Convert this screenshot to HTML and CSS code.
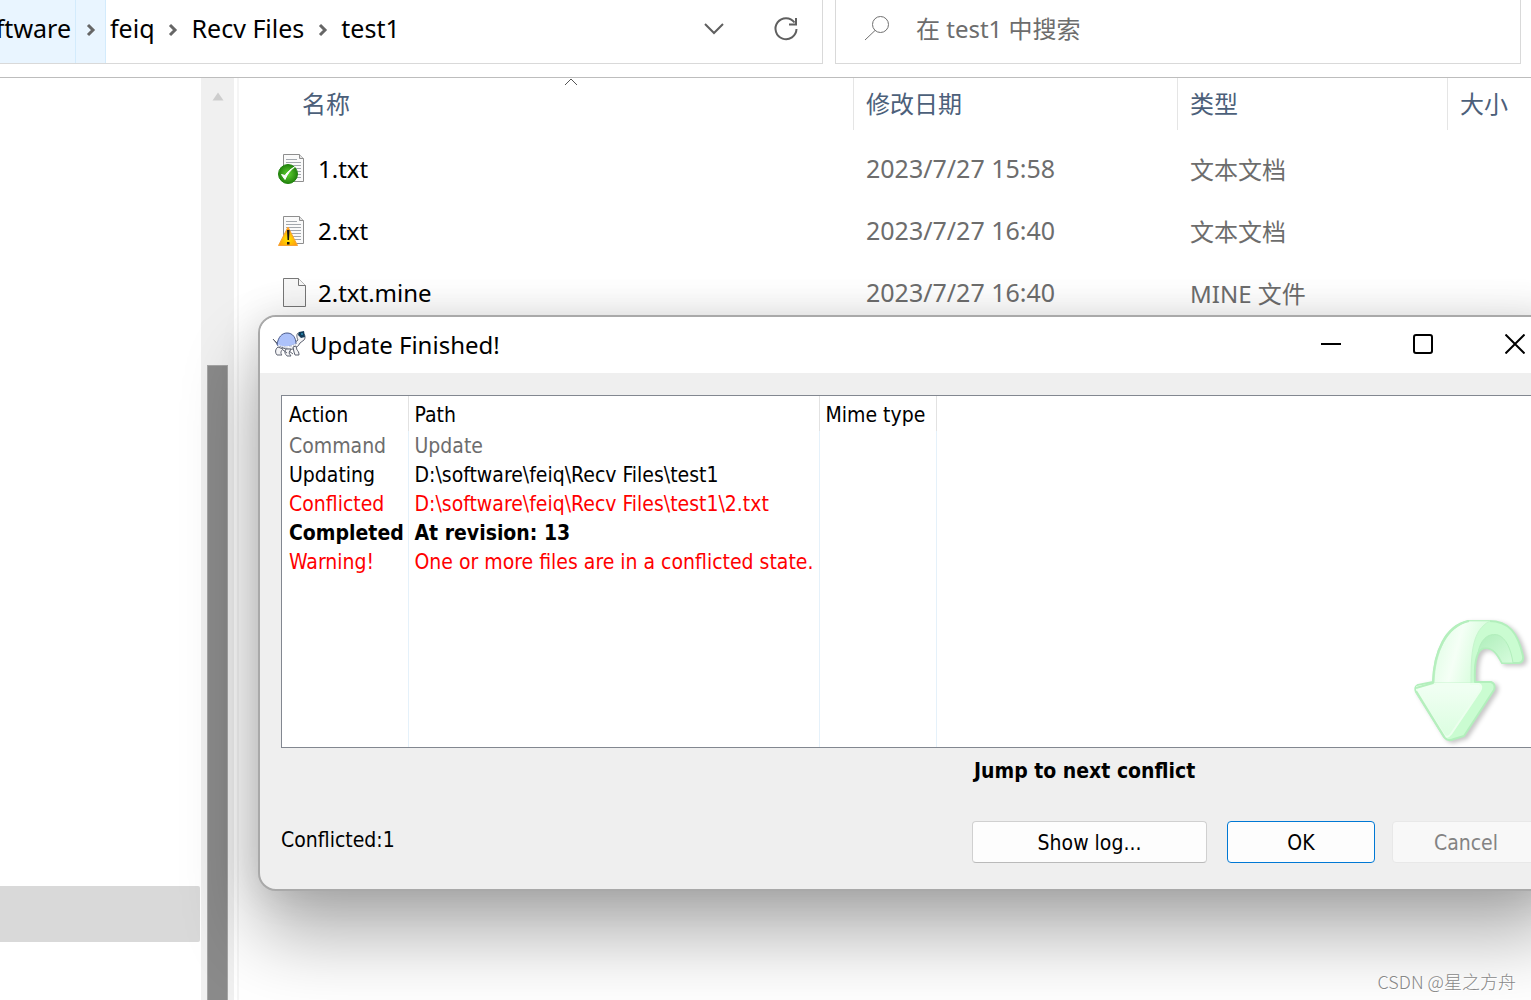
FILE: index.html
```
<!DOCTYPE html>
<html lang="zh-CN">
<head>
    <meta charset="UTF-8">
    <meta name="viewport" content="width=device-width, initial-scale=1.0">
    <title>test1</title>
    <link rel="stylesheet" href="styles.css">
</head>
<body>
    <div class="toolbar">
        <nav class="address">
            <a href="#" class="crumb crumb-hover">ftware</a>
            <span class="sep sep-hover"><svg width="10" height="14" viewBox="0 0 10 14"><path d="M2 2l5 5-5 5"/></svg></span>
            <a href="#" class="crumb">feiq</a>
            <span class="sep"><svg width="10" height="14" viewBox="0 0 10 14"><path d="M2 2l5 5-5 5"/></svg></span>
            <a href="#" class="crumb">Recv Files</a>
            <span class="sep"><svg width="10" height="14" viewBox="0 0 10 14"><path d="M2 2l5 5-5 5"/></svg></span>
            <a href="#" class="crumb">test1</a>
            <div class="address-tools">
                <button class="tool-btn" aria-label="History"><svg width="22" height="14" viewBox="0 0 22 14"><path d="M2 2l9 9 9-9"/></svg></button>
                <button class="tool-btn" aria-label="Refresh"><svg width="26" height="26" viewBox="0 0 26 26"><path d="M21.500 6.500A10.500 10.500 0 1 0 23.500 13M23 2v6.500h-7"/></svg></button>
            </div>
        </nav>
        <label class="search">
            <svg width="26" height="26" viewBox="0 0 26 26"><circle cx="16.500" cy="9.500" r="8"/><path d="M11 15.500L1 25"/></svg>
            <input type="text" placeholder="在 test1 中搜索" aria-label="搜索">
        </label>
    </div>

    <div class="content">
        <div class="tree">
            <div class="tree-selected"></div>
        </div>
        <div class="scrollbar">
            <svg class="scroll-up" width="12" height="9" viewBox="0 0 12 9"><path d="M6 0.500L11.500 8.500H0.500z"/></svg>
            <div class="scroll-thumb"></div>
        </div>
        <div class="files">
            <table class="file-table">
                <thead>
                    <tr>
                        <th class="col-name"><span>名称</span>
                            <svg class="sort" width="14" height="8" viewBox="0 0 14 8"><path d="M1 7l6-6 6 6"/></svg>
                        </th>
                        <th class="col-date"><span>修改日期</span></th>
                        <th class="col-type"><span>类型</span></th>
                        <th class="col-size"><span>大小</span></th>
                    </tr>
                </thead>
                <tbody>
                    <tr>
                        <td>
                            <div class="file">
                                <svg width="30" height="32" viewBox="0 0 30 32">
                                    <defs>
                                        <radialGradient id="green" cx="50%" cy="50%" r="50%"><stop offset="0" stop-color="#5fd431"/><stop offset="1" stop-color="#23820d"/></radialGradient>
                                    </defs>
                                    <path d="M6.500 1.500h16l4 4v23h-20z" fill="#fafafa" stroke="#8e8e8e"/>
                                    <path d="M22.500 1.500v4h4" fill="#e2e2e2" stroke="#8e8e8e"/>
                                    <path d="M9 6.500h11M9 9.500h15M9 12.500h15M9 15.500h15M9 18.500h15M9 21.500h15M9 24.500h15" stroke="#a3a8ad"/>
                                    <circle cx="11" cy="21" r="9.500" fill="url(#green)" stroke="#1f850b"/>
                                    <path d="M4.500 21.500l3.500 5c2-5 5-9 9.500-12.500-4 2-7 5-9.500 8.500z" fill="#fff" stroke="#fff"/>
                                </svg>
                                1.txt
                            </div>
                        </td>
                        <td class="date">2023/7/27 15:58</td>
                        <td class="type">文本文档</td>
                        <td></td>
                    </tr>
                    <tr>
                        <td>
                            <div class="file">
                                <svg width="30" height="32" viewBox="0 0 30 32">
                                    <defs>
                                        <radialGradient id="amber" cx="50%" cy="65%" r="55%"><stop offset="0" stop-color="#ffe600"/><stop offset="1" stop-color="#ff9a0a"/></radialGradient>
                                    </defs>
                                    <path d="M6.500 1.500h16l4 4v23h-20z" fill="#fafafa" stroke="#8e8e8e"/>
                                    <path d="M22.500 1.500v4h4" fill="#e2e2e2" stroke="#8e8e8e"/>
                                    <path d="M9 6.500h11M9 9.500h15M9 12.500h15M9 15.500h15M9 18.500h15M9 21.500h15M9 24.500h15" stroke="#a3a8ad"/>
                                    <path d="M11 12L20.500 30.500h-19z" fill="url(#amber)" stroke="#f7a233"/>
                                    <path d="M10 15h2.500l-0.500 10h-1.500zM10 27h2.500v2.500h-2.500z" fill="#151515"/>
                                </svg>
                                2.txt
                            </div>
                        </td>
                        <td class="date">2023/7/27 16:40</td>
                        <td class="type">文本文档</td>
                        <td></td>
                    </tr>
                    <tr>
                        <td>
                            <div class="file">
                                <svg width="30" height="32" viewBox="0 0 30 32">
                                    <path d="M6.500 1.500h15l7 7v21h-22z" fill="#f7f7f7" stroke="#777"/>
                                    <path d="M21.500 1.500v7h7" fill="#f7f7f7" stroke="#777"/>
                                </svg>
                                2.txt.mine
                            </div>
                        </td>
                        <td class="date">2023/7/27 16:40</td>
                        <td class="type">MINE 文件</td>
                        <td></td>
                    </tr>
                </tbody>
            </table>
        </div>
    </div>

    <div class="dialog" role="dialog" aria-labelledby="dialogTitle">
        <div class="title-bar">
            <svg width="34" height="28" viewBox="0 0 34 28">
                <g fill="#f4f4f6" stroke="#5d6270" stroke-linejoin="round">
                    <path d="M1 9l7 7 3 2c8 3 14 1 17-5l4-3c2-2 1-7-2-7h-4c-2 2-1 5 0 7l-4 3-16 2z"/>
                    <path d="M6 17c-3 2-3 6-1 8h5c-2-2-1-4 1-6zM14 19c-2 3-1 5 1 7h4l-2-3 2-4zM21 17l1 5 1 3h4c0-3-1-4-2-5l-1-4z"/>
                    <path d="M11 20l4 3M17 21l4 3" fill="none"/>
                </g>
                <path d="M5 15C6 7 10 3 15 3c6 0 9 5 9 11-6 3-13 4-19 1z" fill="#adc2fa" stroke="#48598b"/>
                <path d="M6 15c6 3 12 2 18-1" fill="none" stroke="#fff"/>
                <path d="M27 2l5-1 1 6-4 1-3-3z" fill="#123c5b"/>
                <circle cx="30" cy="4" r="1" fill="#2e90b5"/>
            </svg>
            <h1 id="dialogTitle">Update Finished!</h1>
            <div class="window-btns">
                <button aria-label="Minimize"><svg width="20" height="20" viewBox="0 0 20 20"><path d="M0 10h20"/></svg></button>
                <button aria-label="Maximize"><svg width="20" height="20" viewBox="0 0 20 20"><rect x="1" y="1" width="18" height="18" rx="2"/></svg></button>
                <button aria-label="Close"><svg width="20" height="20" viewBox="0 0 20 20"><path d="M0.500 0.500l19 19M19.500 0.500l-19 19"/></svg></button>
            </div>
        </div>
        <div class="dialog-body">
            <div class="list-view">
                <table class="log-table">
                    <thead>
                        <tr><th class="col-action">Action</th><th class="col-path">Path</th><th class="col-mime">Mime type</th><th></th></tr>
                    </thead>
                    <tbody>
                        <tr class="command"><td>Command</td><td>Update</td><td></td><td></td></tr>
                        <tr><td>Updating</td><td>D:\software\feiq\Recv Files\test1</td><td></td><td></td></tr>
                        <tr class="conflict"><td>Conflicted</td><td>D:\software\feiq\Recv Files\test1\2.txt</td><td></td><td></td></tr>
                        <tr class="completed"><td>Completed</td><td>At revision: 13</td><td></td><td></td></tr>
                        <tr class="conflict"><td>Warning!</td><td>One or more files are in a conflicted state.</td><td></td><td></td></tr>
                        <tr class="filler"><td></td><td></td><td></td><td></td></tr>
                    </tbody>
                </table>
                <svg class="update-arrow" width="118" height="128" viewBox="0 0 118 128">
                    <defs>
                        <linearGradient id="face" x1="0" y1="0" x2="1" y2="0.300"><stop offset="0" stop-color="#dcfde1"/><stop offset="0.500" stop-color="#f5fff6"/><stop offset="1" stop-color="#d2fdd8"/></linearGradient>
                        <linearGradient id="head" x1="0" y1="0" x2="0" y2="1"><stop offset="0" stop-color="#f2fff4"/><stop offset="1" stop-color="#dbfee0"/></linearGradient>
                        <linearGradient id="under" x1="0" y1="0" x2="1" y2="1"><stop offset="0" stop-color="#aeeeba"/><stop offset="1" stop-color="#d6fcdc"/></linearGradient>
                    </defs>
                    <g stroke-linejoin="round">
                        <path d="M54 4C31 9 20 35 19 65L4 68Q0 70 2 75l28 45q4 5 10 2l10-3 30-46q2-6-3-8H61C60 44 63 31 72 31c8 0 12 8 16 15h17q5-1 4-7C104 16 95 4 75 4z" fill="#cafcd1" stroke="#b2efbc" stroke-width="2"/>
                        <path d="M64 36C67 20 76 16 84 18c8 3 13 14 15 28H88C84 37 79 31 72 31c-4 0-6 1-8 5z" fill="url(#under)" stroke="#b2efbc"/>
                        <path d="M76 4C58 13 57 36 57 66H20C21 34 33 10 55 4z" fill="url(#face)" stroke="#c6f5cd"/>
                        <path d="M3 70l16-3h46q4 2 1 7l-29 43q-4 5-7 1L3 75z" fill="url(#head)" stroke="#ecffee" stroke-width="2"/>
                        <path d="M22 66h34v4H22z" fill="#f0fff2"/>
                        <path d="M2 71l17-5C20 33 33 9 55 4M2 74l29 47" fill="none" stroke="#b5efbd" stroke-width="2"/>
                    </g>
                </svg>
            </div>
            <div class="jump-row">
                <a href="#" class="jump">Jump to next conflict</a>
            </div>
            <div class="dialog-footer">
                <span class="summary">Conflicted:1</span>
                <button class="btn btn-log">Show log...</button>
                <button class="btn btn-default">OK</button>
                <button class="btn" disabled>Cancel</button>
            </div>
        </div>
    </div>

    <div class="watermark">CSDN @星之方舟</div>
</body>
</html>
```
FILE: styles.css
```
* {
    box-sizing: border-box;
}
body {
    margin: 0;
    height: 100vh;
    display: flex;
    flex-direction: column;
    position: relative;
    overflow: hidden;
    background-color: #fff;
    color: #000;
    font-family: "Noto Sans", "Noto Sans CJK SC", sans-serif;
    font-size: 24px;
}
svg {
    display: block;
    flex: none;
    fill: none;
}
a {
    color: inherit;
    text-decoration: none;
}
button,
input {
    font: inherit;
    color: inherit;
    background: none;
    border: none;
    padding: 0;
}

/* address bar and search */
.toolbar {
    display: grid;
    grid-template-columns: 823fr 686fr;
    gap: 12px;
    height: 78px;
    padding: 0 10px 13px 0;
    border-bottom: 1px solid #bdbdbd;
}
.address {
    min-width: 0;
    display: flex;
    align-items: stretch;
    border: 1px solid #d9d9d9;
    border-width: 0 1px 1px 0;
    font-size: 25px;
    line-height: 56px;
}
.crumb-hover {
    width: 76px;
    display: flex;
    justify-content: flex-end;
    overflow: hidden;
    padding-right: 4px;
    background-color: #e9f5ff;
    border-right: 1px solid #d3ebfc;
}
.sep {
    width: 37px;
    display: flex;
    align-items: center;
    justify-content: center;
    padding-bottom: 4px;
}
.sep-hover {
    width: 30px;
    margin-right: 4px;
    background-color: #e9f5ff;
    border-right: 1px solid #d3ebfc;
}
.sep path {
    stroke: #666;
    stroke-width: 3;
}
.address-tools {
    margin-left: auto;
    display: flex;
}
.tool-btn {
    width: 72px;
    display: flex;
    align-items: center;
    justify-content: center;
    padding-bottom: 5px;
}
.tool-btn path {
    stroke: #5f5f5f;
    stroke-width: 2;
}
.search {
    min-width: 0;
    display: flex;
    align-items: center;
    gap: 26px;
    padding: 0 28px 7px;
    border: 1px solid #d9d9d9;
    border-top: none;
}
.search svg {
    stroke: #707070;
}
.search input {
    flex: 1;
    min-width: 0;
}
.search input::placeholder {
    color: #6d6d6d;
}

/* explorer panes */
.content {
    flex: 1;
    display: flex;
    min-height: 0;
}
.tree {
    width: 201px;
    display: flex;
    flex-direction: column;
    justify-content: flex-end;
    padding: 0 1px 58px 0;
}
.tree-selected {
    height: 56px;
    background-color: #d9d9d9;
    border-radius: 0 2px 2px 0;
}
.scrollbar {
    width: 33px;
    display: flex;
    flex-direction: column;
    align-items: center;
    padding-top: 14px;
    background-color: #f0f0f0;
}
.scroll-up path {
    fill: #cdcdcd;
}
.scroll-thumb {
    flex: 1;
    width: 21px;
    margin-top: 264px;
    background-color: #8a8a8a;
    border: 1px solid #a5a5a5;
    border-bottom: none;
}
.files {
    flex: 1;
    margin-left: 3px;
    border-left: 2px solid #f5f5f5;
}
.file-table {
    width: 100%;
    table-layout: fixed;
    border-collapse: collapse;
}
.file-table th {
    position: relative;
    height: 60px;
    padding: 0;
    vertical-align: top;
    text-align: left;
    font-weight: normal;
    color: #4c607a;
}
.file-table th span {
    display: block;
    height: 52px;
    line-height: 52px;
    padding-left: 12px;
    border-left: 1px solid #e5e5e5;
}
.file-table .col-name span {
    padding-left: 63px;
    border-left: none;
}
.col-date {
    width: 324px;
}
.col-type {
    width: 270px;
}
.col-size {
    width: 84px;
}
.sort {
    position: absolute;
    top: 0;
    left: 53%;
}
.sort path {
    stroke: #555;
}
.file-table td {
    height: 62px;
    padding: 0 0 2px 13px;
    color: #6d6d6d;
}
.file-table td:first-child {
    padding-left: 38px;
    color: #000;
}
.file {
    display: flex;
    align-items: center;
    gap: 11px;
}
.file svg {
    margin-top: 2px;
}
.date {
    font-size: 25px;
}

/* update dialog */
.dialog {
    position: absolute;
    top: 315px;
    left: 258px;
    right: -32px;
    background-color: #efefef;
    border: 2px solid #a9a9a9;
    border-radius: 18px;
    box-shadow: 0 44px 76px rgba(0, 0, 0, 0.32), 0 0 40px rgba(0, 0, 0, 0.12);
    overflow: hidden;
    font-family: Tahoma, "DejaVu Sans Condensed", sans-serif;
    font-size: 21px;
}
.title-bar {
    display: flex;
    align-items: center;
    height: 56px;
    padding: 0 0 2px 12px;
    background-color: #fff;
}
.title-bar h1 {
    margin: 0 0 0 4px;
    font-family: "Noto Sans", sans-serif;
    font-size: 24px;
    font-weight: normal;
}
.window-btns {
    margin-left: auto;
    display: flex;
    align-self: stretch;
}
.window-btns button {
    width: 92px;
    display: flex;
    align-items: center;
    justify-content: center;
}
.window-btns svg {
    stroke: #000;
    stroke-width: 2;
}
.dialog-body {
    padding: 22px 21px 26px;
}
.list-view {
    position: relative;
    height: 353px;
    background-color: #fff;
    border: 1px solid #828790;
}
.log-table {
    width: 100%;
    height: 100%;
    table-layout: fixed;
    border-collapse: collapse;
    line-height: 27px;
}
.log-table th,
.log-table td {
    height: 29px;
    padding: 2px 0 0 6px;
    text-align: left;
    white-space: nowrap;
    border-right: 1px solid #e5f1fa;
}
.log-table th {
    height: 35px;
    padding-top: 4px;
    font-weight: normal;
    border-right-color: #e2e2e2;
}
.log-table th:first-child,
.log-table td:first-child {
    padding-left: 7px;
}
.log-table th:last-child,
.log-table td:last-child {
    border-right: none;
}
.log-table .col-action {
    width: 126px;
}
.log-table .col-path {
    width: 411px;
}
.log-table .col-mime {
    width: 117px;
}
.log-table .filler td {
    height: auto;
}
.command {
    color: #6d6d6d;
}
.conflict {
    color: #f00;
}
.completed {
    font-weight: bold;
}
.update-arrow {
    position: absolute;
    right: 7px;
    bottom: 2px;
    filter: drop-shadow(3px 2px 2px rgba(0, 0, 0, 0.22));
}
.jump-row {
    display: flex;
    justify-content: flex-end;
    height: 73px;
    line-height: 46px;
}
.jump {
    width: 566px;
    font-weight: bold;
}
.dialog-footer {
    display: flex;
    align-items: center;
    gap: 17px;
}
.summary {
    flex: 1;
    padding-bottom: 5px;
}
.btn {
    width: 148px;
    height: 42px;
    padding-top: 2px;
    background-color: #fdfdfd;
    border: 1px solid #d0d0d0;
    border-bottom-color: #bababa;
    border-radius: 4px;
}
.btn-log {
    width: 235px;
    margin-right: 3px;
}
.btn-default {
    border-color: #0078d4;
}
.btn:disabled {
    color: #838383;
    background-color: #f8f8f8;
    border-color: #e8e8e8;
}

.watermark {
    position: absolute;
    right: 15px;
    bottom: 6px;
    font-family: "Noto Sans CJK SC", sans-serif;
    font-size: 18px;
    font-weight: 300;
    color: #888;
    text-shadow: 1px 1px 0 #fff;
}
```
